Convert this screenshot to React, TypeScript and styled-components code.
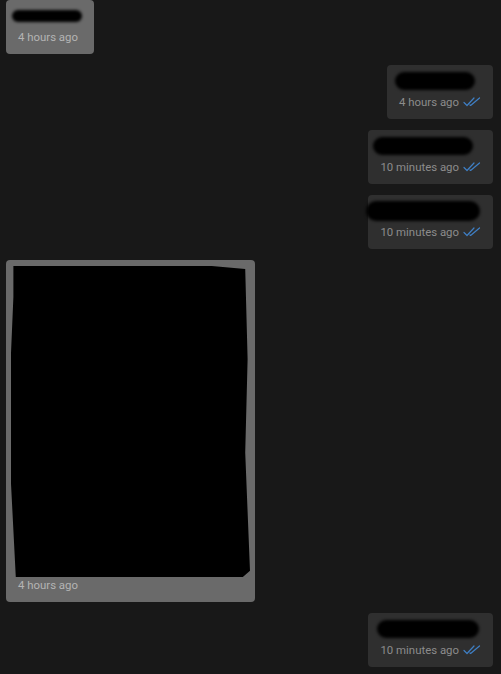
import styled, { createGlobalStyle } from 'styled-components';

const GlobalStyle = createGlobalStyle`
  html, body {
    margin: 0;
    padding: 0;
    background: #181818;
    font-family: Roboto, "Liberation Sans", sans-serif;
  }
`;

interface Message {
  mine: boolean;
  time: string;
  blob?: { width: number; offset: number; height: number };
  image?: boolean;
}

const messages: Message[] = [
  { mine: false, time: '4 hours ago', blob: { width: 70, offset: -6, height: 12 } },
  { mine: true, time: '4 hours ago', blob: { width: 80, offset: -4, height: 18 } },
  { mine: true, time: '10 minutes ago', blob: { width: 100, offset: -7, height: 18 } },
  { mine: true, time: '10 minutes ago', blob: { width: 114, offset: -14, height: 20 } },
  { mine: false, time: '4 hours ago', image: true },
  { mine: true, time: '10 minutes ago', blob: { width: 102, offset: -3, height: 18 } },
];

const DoubleCheck = () => (
  <svg width="18" height="10" viewBox="0 0 18 10" fill="none">
    <path d="M1 5.5 L4 8.5 L11 1" stroke="#3f7fc4" strokeWidth="1.2" strokeLinecap="round" strokeLinejoin="round" />
    <path d="M7 8 L7.6 8.5 L16.5 1" stroke="#3f7fc4" strokeWidth="1.2" strokeLinecap="round" strokeLinejoin="round" />
  </svg>
);

const App = () => {
  return (
    <>
      <GlobalStyle />
      <Thread>
        {messages.map((m, i) => (
          <Row key={i} $mine={m.mine}>
            <Bubble $mine={m.mine} $image={!!m.image}>
              {m.image ? (
                <Picture />
              ) : (
                <Line>
                  <Redaction
                    style={{ width: m.blob!.width, height: m.blob!.height, marginLeft: m.blob!.offset }}
                  />
                </Line>
              )}
              <Meta $image={!!m.image}>
                <Time $mine={m.mine}>{m.time}</Time>
                {m.mine && <DoubleCheck />}
              </Meta>
            </Bubble>
          </Row>
        ))}
      </Thread>
    </>
  );
};

const Thread = styled.div`
  display: flex;
  flex-direction: column;
  gap: 11px;
  padding: 0 8px 8px 6px;
`;

const Row = styled.div<{ $mine: boolean }>`
  display: flex;
  justify-content: ${(p) => (p.$mine ? 'flex-end' : 'flex-start')};
`;

const Bubble = styled.div<{ $mine: boolean; $image: boolean }>`
  display: flex;
  flex-direction: column;
  align-items: ${(p) => (p.$mine ? 'flex-end' : 'flex-start')};
  background: ${(p) => (p.$mine ? '#2f2f2f' : '#6a6a6a')};
  border-radius: 4px;
  padding: ${(p) => (p.$image ? '6px 5px 9px 5px' : '6px 12px 9px 12px')};
  box-sizing: border-box;
  min-width: ${(p) => (p.$mine ? '106px' : '88px')};
  width: ${(p) => (p.$image ? '249px' : 'auto')};
`;

const Line = styled.div`
  height: 20px;
  width: 100%;
  display: flex;
  align-items: center;
  margin-bottom: 3px;
`;

const Redaction = styled.span`
  display: block;
  background: #000;
  border-radius: 10px;
  filter: blur(1.5px);
`;

const Picture = styled.div`
  width: 239px;
  height: 311px;
  background: #000;
  clip-path: polygon(1% 0%, 84% 0%, 98% 1%, 99% 30%, 98% 60%, 100% 98%, 97% 100%, 2% 100%, 0% 70%, 0% 28%, 1% 10%);
`;

const Meta = styled.div<{ $image: boolean }>`
  display: flex;
  align-items: center;
  gap: 4px;
  height: 16px;
  padding-left: ${(p) => (p.$image ? '7px' : '0')};
`;

const Time = styled.span<{ $mine: boolean }>`
  font-size: 11.4px;
  color: ${(p) => (p.$mine ? '#8c8c8c' : '#b4b4b4')};
`;

export default App;
